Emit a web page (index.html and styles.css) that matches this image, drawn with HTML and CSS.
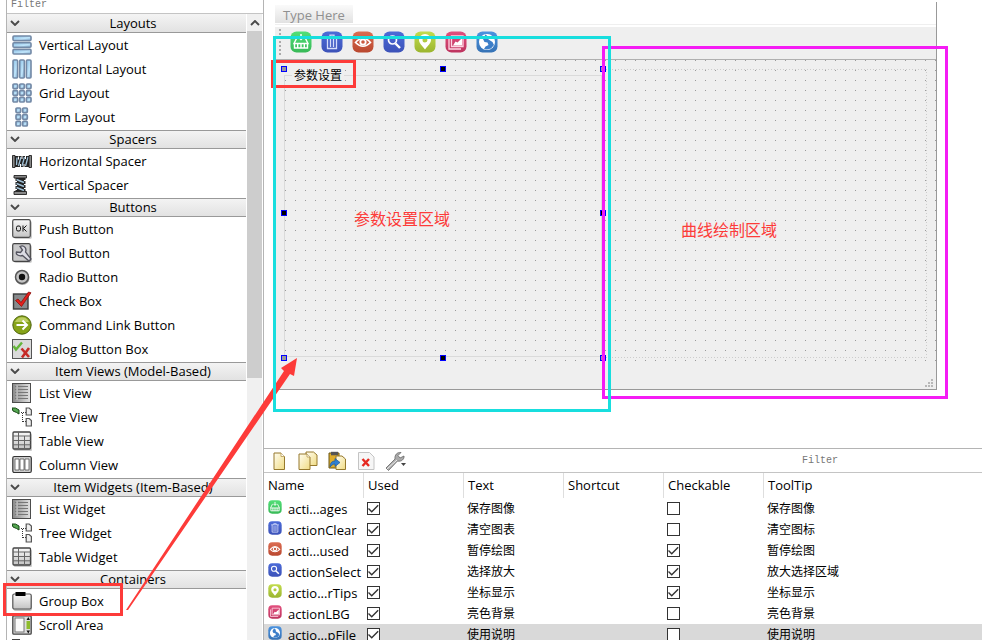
FILE: index.html
```html
<!DOCTYPE html>
<html lang="zh">
<head>
<meta charset="utf-8">
<title>Form Designer</title>
<link rel="stylesheet" href="styles.css">
</head>
<body>
<svg class="defs" aria-hidden="true">
  <defs>
    <linearGradient id="blue" x1="0" y1="0" x2="1" y2="1"><stop offset="0" stop-color="#8cc0e6"/><stop offset=".6" stop-color="#bfe4fa"/><stop offset="1" stop-color="#84b0d4"/></linearGradient>
    <linearGradient id="metal" x1="0" y1="0" x2="0" y2="1"><stop offset="0" stop-color="#f8f8f8"/><stop offset="1" stop-color="#c4c4c4"/></linearGradient>
    <linearGradient id="steel" x1="0" y1="0" x2="1" y2="0"><stop offset="0" stop-color="#888"/><stop offset="1" stop-color="#e4e4e4"/></linearGradient>
    <linearGradient id="paper" x1="0" y1="0" x2="1" y2="1"><stop offset="0" stop-color="#fffdf0"/><stop offset="1" stop-color="#f0db83"/></linearGradient>
    <linearGradient id="g-green" x1="0" y1="0" x2="0" y2="1"><stop offset="0" stop-color="#52df77"/><stop offset="1" stop-color="#38b957"/></linearGradient>
    <linearGradient id="g-blue" x1="0" y1="0" x2="0" y2="1"><stop offset="0" stop-color="#4c6bd8"/><stop offset="1" stop-color="#3c52b8"/></linearGradient>
    <linearGradient id="g-red" x1="0" y1="0" x2="0" y2="1"><stop offset="0" stop-color="#dc6d52"/><stop offset="1" stop-color="#b9482f"/></linearGradient>
    <linearGradient id="g-lime" x1="0" y1="0" x2="0" y2="1"><stop offset="0" stop-color="#c3dc4e"/><stop offset="1" stop-color="#9bb52f"/></linearGradient>
    <linearGradient id="g-pink" x1="0" y1="0" x2="0" y2="1"><stop offset="0" stop-color="#e2507e"/><stop offset="1" stop-color="#bd345f"/></linearGradient>
    <linearGradient id="g-sky" x1="0" y1="0" x2="0" y2="1"><stop offset="0" stop-color="#4b93e0"/><stop offset="1" stop-color="#3672b5"/></linearGradient>
  </defs>
  <symbol id="i-vlayout" viewBox="0 0 20 20"><g fill="url(#blue)" stroke="#7389a6" stroke-width="1.6"><rect x="1" y="1" width="18" height="4.600" rx="1"/><rect x="1" y="7.700" width="18" height="4.600" rx="1"/><rect x="1" y="14.400" width="18" height="4.600" rx="1"/></g></symbol>
  <symbol id="i-hlayout" viewBox="0 0 20 20"><g fill="url(#blue)" stroke="#7389a6" stroke-width="1.6"><rect x="1" y="1" width="4.600" height="18" rx="1"/><rect x="7.700" y="1" width="4.600" height="18" rx="1"/><rect x="14.400" y="1" width="4.600" height="18" rx="1"/></g></symbol>
  <symbol id="i-glayout" viewBox="0 0 20 20"><g fill="url(#blue)" stroke="#7389a6" stroke-width="1.7"><rect x="1" y="1" width="4.600" height="4.600" rx="1"/><rect x="7.700" y="1" width="4.600" height="4.600" rx="1"/><rect x="14.400" y="1" width="4.600" height="4.600" rx="1"/><rect x="1" y="7.700" width="4.600" height="4.600" rx="1"/><rect x="7.700" y="7.700" width="4.600" height="4.600" rx="1"/><rect x="14.400" y="7.700" width="4.600" height="4.600" rx="1"/><rect x="1" y="14.400" width="4.600" height="4.600" rx="1"/><rect x="7.700" y="14.400" width="4.600" height="4.600" rx="1"/><rect x="14.400" y="14.400" width="4.600" height="4.600" rx="1"/></g></symbol>
  <symbol id="i-flayout" viewBox="0 0 20 20"><g fill="url(#blue)" stroke="#7389a6" stroke-width="1.7"><rect x="4" y="1" width="4.600" height="4.600" rx="1"/><rect x="10.700" y="1" width="4.600" height="4.600" rx="1"/><rect x="4" y="7.700" width="4.600" height="4.600" rx="1"/><rect x="10.700" y="7.700" width="4.600" height="4.600" rx="1"/><rect x="4" y="14.400" width="4.600" height="4.600" rx="1"/><rect x="10.700" y="14.400" width="4.600" height="4.600" rx="1"/></g></symbol>
  <symbol id="i-hspacer" viewBox="0 0 20 20"><path d="M3 5h14v11H3z" fill="#222"/><path d="M5 6.500 4.500 14M9 6 6.500 15M12.500 6 10 15M16 6l-2.500 9" stroke="#9fc0d6" stroke-width="1.300"/><path d="M6.500 5.500v3M10 5v3M13.500 5v3M8.500 13v3M12 13v3" stroke="#fff" stroke-width="1"/><path d="M.5 4.500h2.500v12H.5zM17 4.500h2.500v12H17z" fill="#888" stroke="#222" stroke-width=".9"/></symbol>
  <symbol id="i-vspacer" viewBox="0 0 20 20"><path d="M3.500 3h10v14h-10z" fill="#222"/><path d="M4.500 4.500 12 7.500M4.500 8.500 12 11.500M4.500 12.500 12 15.500" stroke="#9fc0d6" stroke-width="1.500"/><path d="M3 6.500h2M3 10.500h2M3 14.500h2M12 5.500h2M12 9.500h2M12 13.500h2" stroke="#fff"/><path d="M2 .5h12.500v2.500H2zM2 16.500h12.500v3H2z" fill="#888" stroke="#222" stroke-width=".9"/></symbol>
  <symbol id="i-push" viewBox="0 0 20 20"><rect x="2" y="2" width="18" height="18" rx="2" fill="#999" opacity=".5"/><rect x=".7" y=".7" width="17.600" height="17.600" rx="1.500" fill="url(#metal)" stroke="#4c4c4c" stroke-width="1.200"/><rect x="4.500" y="7" width="4" height="5" rx="1.500" fill="none" stroke="#111"/><path d="M11 6.500v6M14.500 6.500l-3 3 3 3" fill="none" stroke="#111"/></symbol>
  <symbol id="i-tool" viewBox="0 0 20 20"><rect x="2" y="2" width="18" height="18" rx="2" fill="#999" opacity=".5"/><rect x=".7" y=".7" width="17.600" height="17.600" rx="1.500" fill="#c9c9ca" stroke="#444" stroke-width="1.200"/><path d="M8 3.500c4-2 7 2 5.500 5.500l5.500 7-2 2-6.500-5.500c-4 1-7-1-6-3.500l4 .5 2-2.500z" fill="#dcdce4" stroke="#53535e" stroke-width="1.300"/></symbol>
  <symbol id="i-radio" viewBox="0 0 20 20"><circle cx="10.500" cy="11" r="7" fill="#aaa"/><circle cx="10" cy="10" r="6.500" fill="#c4c4c4" stroke="#555" stroke-width="1.500"/><circle cx="10" cy="10" r="3.200" fill="#111"/></symbol>
  <symbol id="i-check" viewBox="0 0 20 20"><rect x="1.500" y="3" width="14.500" height="15" fill="#888b8d" stroke="#3c3c3c" stroke-width="1.400"/><path d="M3.500 9.500 6 8l3 3.500L16.500 1 19 1.800 9.500 15.500z" fill="#e4201c" stroke="#8d0f0c" stroke-width=".8"/></symbol>
  <symbol id="i-command" viewBox="0 0 20 20"><circle cx="10" cy="10" r="9.200" fill="#86a318" stroke="#4d620c"/><path d="M3 7a7.500 7.500 0 0 1 14 0z" fill="#bccd62"/><path d="M4.500 10h10M10.500 5.500 15 10l-4.500 4.500" fill="none" stroke="#fff" stroke-width="2"/></symbol>
  <symbol id="i-dialog" viewBox="0 0 20 20"><rect x=".5" y=".5" width="19" height="19" fill="#dadada" stroke="#555"/><path d="M1.500 7 4 10.500 10 3.500" fill="none" stroke="#65b53b" stroke-width="2.400"/><path d="M9.500 9.500 17 18M17 9l-7 9.500" stroke="#c62b27" stroke-width="2.600"/></symbol>
  <symbol id="i-list" viewBox="0 0 20 20"><rect x=".5" y=".5" width="18" height="19" fill="url(#steel)" stroke="#4c4c4c"/><path d="M3 3.500h1.500M6 3.500h10M3 6.500h1.500M6 6.500h10M3 9.500h1.500M6 9.500h10M3 12.500h1.500M6 12.500h10M3 15.500h1.500M6 15.500h10" stroke="#777"/><path d="M5 2v15" stroke="#ddd" stroke-width=".7"/></symbol>
  <symbol id="i-tree" viewBox="0 0 20 20"><path d="M0 1h3.500L7 3v4L4.500 5.500 1 4z" fill="#54a650" stroke="#174817"/><path d="M9 5.500h5M10.500 6v9M11 14.500h3" stroke="#333" stroke-dasharray="1 1" fill="none"/><path d="M14.200 1h3l2.200 2v5h-5.200zM14.200 11.500h3l2.200 2v5.500h-5.200z" fill="#eee" stroke="#555" stroke-width="1.200"/></symbol>
  <symbol id="i-table" viewBox="0 0 20 20"><rect x="2" y="3" width="18" height="17" rx="1" fill="#999" opacity=".5"/><rect x="1" y="1" width="17.500" height="17" rx="1" fill="url(#metal)" stroke="#444" stroke-width="1.300"/><path d="M1 5h17.500M1 9.500h17.500M1 13.800h17.500M6.500 1v17M12.500 5v13" stroke="#666" stroke-width="1"/></symbol>
  <symbol id="i-column" viewBox="0 0 20 20"><rect x=".8" y="1.500" width="18.500" height="16" rx="1.500" fill="#ccc" stroke="#333" stroke-width="1.200"/><path d="M3 4h4v11H3zM8 4h4v11H8zM13 4h4v11h-4z" fill="#fff" stroke="#555" stroke-width=".8"/></symbol>
  <symbol id="i-group" viewBox="0 0 20 20"><rect x="1.500" y="4" width="18.500" height="16" rx="2" fill="#999" opacity=".6"/><rect x=".8" y="3" width="18.400" height="15" rx="1.500" fill="url(#metal)" stroke="#555" stroke-width="1.200"/><path d="M3.500 1h10v4h-10z" fill="#000"/></symbol>
  <symbol id="i-scroll" viewBox="0 0 20 20"><rect x=".8" y=".8" width="18.400" height="18.400" rx="1" fill="#ddd" stroke="#444" stroke-width="1.300"/><rect x="3" y="3" width="9" height="14" fill="#fafafa" stroke="#777"/><path d="M14.500 6h3.500v8h-3.500z" fill="#8ebc2c"/><path d="m14.500 5 1.800-3 1.700 3zM14.500 15.500l1.800 3 1.700-3z" fill="#111"/></symbol>
  <symbol id="i-toolbox" viewBox="0 0 20 20"><path d="M0 0h8v4h11v15H0z" fill="#444"/></symbol>

  <symbol id="a-save" viewBox="0 0 22 22"><rect width="21" height="21" x=".5" y=".5" rx="6" fill="url(#g-green)"/><path d="M11 3v5M8.500 6 11 8.500 13.500 6" stroke="#fff" stroke-width="1.500" fill="none"/><path d="M7 6.500 4 12.500h14L15 6.500" fill="none" stroke="#fff" stroke-width="1.400"/><path d="M4.500 12.500v4.500h13v-4.500M7.700 12.500V17M11 12.500V17M14.300 12.500V17" fill="none" stroke="#fff" stroke-width="1.400"/></symbol>
  <symbol id="a-clear" viewBox="0 0 22 22"><rect width="21" height="21" x=".5" y=".5" rx="6" fill="url(#g-blue)"/><path d="M5 6h12M9 6V4.200h4V6M6.500 6v11.500h9V6M9.500 8v8M12.500 8v8" fill="none" stroke="#d5dcfa" stroke-width="1.300"/></symbol>
  <symbol id="a-pause" viewBox="0 0 22 22"><rect width="21" height="21" x=".5" y=".5" rx="6" fill="url(#g-red)"/><path d="M3.500 11.500Q11 3 18.500 11.500 11 19 3.500 11.500z" fill="none" stroke="#fff" stroke-width="1.600"/><circle cx="11" cy="11" r="2.700" fill="none" stroke="#fff" stroke-width="1.800"/></symbol>
  <symbol id="a-select" viewBox="0 0 22 22"><rect width="21" height="21" x=".5" y=".5" rx="6" fill="url(#g-blue)"/><circle cx="9.500" cy="9" r="4" fill="none" stroke="#fff" stroke-width="1.700"/><path d="m12.500 12.500 4.500 4.500" stroke="#fff" stroke-width="2.400"/></symbol>
  <symbol id="a-tips" viewBox="0 0 22 22"><rect width="21" height="21" x=".5" y=".5" rx="6" fill="url(#g-lime)"/><path fill-rule="evenodd" d="M11 18.500C8 14.500 5 12 5 9a6 6 0 0 1 12 0c0 3-3 5.500-6 9.500zM11 6.500a2.500 2.500 0 1 0 0 5 2.500 2.500 0 0 0 0-5z" fill="#fff"/></symbol>
  <symbol id="a-light" viewBox="0 0 22 22"><rect width="21" height="21" x=".5" y=".5" rx="6" fill="url(#g-pink)"/><path d="M6.500 5h11.500v10.500H6.500zM4 7v11h12" fill="none" stroke="#ffd5e3" stroke-width="1.300"/><path d="m8 14.500 2.500-4 2 1L17 7v7.500z" fill="#fff"/></symbol>
  <symbol id="a-help" viewBox="0 0 22 22"><rect width="21" height="21" x=".5" y=".5" rx="6" fill="url(#g-sky)"/><circle cx="11" cy="11" r="8" fill="#fff"/><path d="M11 3.500 14 4l-1.500 2.500-3 1.500 1 2.500 3 .5 1.500 3-2.500 4.500-2.500-2-.5-3L5.500 11 4 8l3-3.500z" fill="#3d7fc9" transform="rotate(180 11 11)"/></symbol>

  <symbol id="i-chev" viewBox="0 0 10 6"><path d="m1 1 4 4 4-4" fill="none" stroke="#4a4a4a" stroke-width="1.900"/></symbol>
  <symbol id="t-new" viewBox="0 0 20 20"><path d="M5 2h7l3.500 3.500V18.500H5z" fill="url(#paper)" stroke="#96792d"/><path d="M12 2v3.500h3.500" fill="#fff" stroke="#b79b50" stroke-width=".8"/></symbol>
  <symbol id="t-copy" viewBox="0 0 20 20"><path d="M8 1h7.500L19 4v10.500H8z" fill="url(#paper)" stroke="#96792d"/><path d="M1 3h8l3 3v12.500H1z" fill="url(#paper)" stroke="#96792d"/><path d="M9 3v3h3" fill="#fff" stroke="#b79b50" stroke-width=".8"/></symbol>
  <symbol id="t-paste" viewBox="0 0 20 20"><path d="M2 2h10v15H2z" fill="#dfad2b" stroke="#6b5616"/><path d="M4 .8h7v3.500H4z" fill="#555"/><path d="M9 5h6l3.500 3v10.500H9z" fill="url(#paper)" stroke="#96792d"/><path d="M3 16c0-4 2-6 5-6V7.500l5 4-5 4V13c-2 0-3 1-5 3z" fill="#2f7fd0" stroke="#1e589a" stroke-width=".7"/></symbol>
  <symbol id="t-del" viewBox="0 0 20 20"><path d="M2.500 1.500h11L18 6v12.500H2.500z" fill="#f6f6f6" stroke="#c4c4c4"/><path d="m6.500 8 6.500 7M13 8l-6.500 7" stroke="#e52820" stroke-width="2.400"/></symbol>
  <symbol id="t-wrench" viewBox="0 0 22 20"><path d="M1 17 10 8c-.5-4 2-7 6-6.500l-3 3 2 2.500 4-2c.5 3-2.500 6-6.500 5L3.500 19.500z" fill="#aaa" stroke="#666" stroke-width=".8"/><path d="m2 18 10-9" stroke="#eee"/><path d="M16 12h5l-2.500 3z" fill="#444"/></symbol>
</svg>

<div class="app">
  <aside class="widgets">
    <div class="widget-filter"><input class="filter" type="text" placeholder="Filter" aria-label="Widget filter"></div>
    <div class="widget-body">
      <nav class="tree">
        <section class="group first">
          <button class="group-head"><svg class="chev"><use href="#i-chev"/></svg>Layouts</button>
          <div class="item"><svg class="icon"><use href="#i-vlayout"/></svg>Vertical Layout</div>
          <div class="item"><svg class="icon"><use href="#i-hlayout"/></svg>Horizontal Layout</div>
          <div class="item"><svg class="icon"><use href="#i-glayout"/></svg>Grid Layout</div>
          <div class="item"><svg class="icon"><use href="#i-flayout"/></svg>Form Layout</div>
        </section>
        <section class="group">
          <button class="group-head"><svg class="chev"><use href="#i-chev"/></svg>Spacers</button>
          <div class="item"><svg class="icon"><use href="#i-hspacer"/></svg>Horizontal Spacer</div>
          <div class="item"><svg class="icon"><use href="#i-vspacer"/></svg>Vertical Spacer</div>
        </section>
        <section class="group">
          <button class="group-head"><svg class="chev"><use href="#i-chev"/></svg>Buttons</button>
          <div class="item"><svg class="icon"><use href="#i-push"/></svg>Push Button</div>
          <div class="item"><svg class="icon"><use href="#i-tool"/></svg>Tool Button</div>
          <div class="item"><svg class="icon"><use href="#i-radio"/></svg>Radio Button</div>
          <div class="item"><svg class="icon"><use href="#i-check"/></svg>Check Box</div>
          <div class="item"><svg class="icon"><use href="#i-command"/></svg>Command Link Button</div>
          <div class="item"><svg class="icon"><use href="#i-dialog"/></svg>Dialog Button Box</div>
        </section>
        <section class="group">
          <button class="group-head"><svg class="chev"><use href="#i-chev"/></svg>Item Views (Model-Based)</button>
          <div class="item"><svg class="icon"><use href="#i-list"/></svg>List View</div>
          <div class="item"><svg class="icon"><use href="#i-tree"/></svg>Tree View</div>
          <div class="item"><svg class="icon"><use href="#i-table"/></svg>Table View</div>
          <div class="item"><svg class="icon"><use href="#i-column"/></svg>Column View</div>
        </section>
        <section class="group">
          <button class="group-head"><svg class="chev"><use href="#i-chev"/></svg>Item Widgets (Item-Based)</button>
          <div class="item"><svg class="icon"><use href="#i-list"/></svg>List Widget</div>
          <div class="item"><svg class="icon"><use href="#i-tree"/></svg>Tree Widget</div>
          <div class="item"><svg class="icon"><use href="#i-table"/></svg>Table Widget</div>
        </section>
        <section class="group">
          <button class="group-head"><svg class="chev"><use href="#i-chev"/></svg>Containers</button>
          <div class="item"><svg class="icon"><use href="#i-group"/></svg>Group Box</div>
          <div class="item"><svg class="icon"><use href="#i-scroll"/></svg>Scroll Area</div>
          <div class="item"><svg class="icon"><use href="#i-toolbox"/></svg></div>
        </section>
      </nav>
      <div class="scrollbar">
        <button class="scroll-up" aria-label="Scroll up"><svg class="chev up"><use href="#i-chev"/></svg></button>
        <div class="thumb"></div>
      </div>
    </div>
  </aside>

  <main class="main">
    <div class="canvas">
      <div class="form">
        <div class="menubar"><span class="type-here">Type Here</span></div>
        <div class="toolbar">
          <span class="grip"></span>
          <button class="tool" aria-label="保存图像"><svg><use href="#a-save"/></svg></button>
          <button class="tool" aria-label="清空图标"><svg><use href="#a-clear"/></svg></button>
          <button class="tool" aria-label="暂停绘图"><svg><use href="#a-pause"/></svg></button>
          <button class="tool" aria-label="放大选择区域"><svg><use href="#a-select"/></svg></button>
          <button class="tool" aria-label="坐标显示"><svg><use href="#a-tips"/></svg></button>
          <button class="tool" aria-label="亮色背景"><svg><use href="#a-light"/></svg></button>
          <button class="tool" aria-label="使用说明"><svg><use href="#a-help"/></svg></button>
        </div>
        <div class="central">
          <div class="groupbox"><span class="groupbox-title">参数设置</span></div>
          <div class="plot-layout"></div>
          <i class="handle corner h-nw"></i><i class="handle h-n"></i><i class="handle corner h-ne"></i>
          <i class="handle h-w"></i><i class="handle h-e"></i>
          <i class="handle corner h-sw"></i><i class="handle h-s"></i><i class="handle corner h-se"></i>
        </div>
        <div class="statusbar"><svg class="size-grip" viewBox="0 0 8 8"><path d="M6 0h2v2H6zM3 3h2v2H3zM6 3h2v2H6zM0 6h2v2H0zM3 6h2v2H3zM6 6h2v2H6z" fill="#b8b8b8"/></svg></div>
      </div>
    </div>

    <section class="actions">
      <div class="action-bar">
        <button class="action-tool" aria-label="New"><svg><use href="#t-new"/></svg></button>
        <button class="action-tool" aria-label="Copy"><svg><use href="#t-copy"/></svg></button>
        <button class="action-tool" aria-label="Paste"><svg><use href="#t-paste"/></svg></button>
        <button class="action-tool" aria-label="Delete"><svg><use href="#t-del"/></svg></button>
        <button class="action-tool wide" aria-label="Configure"><svg><use href="#t-wrench"/></svg></button>
        <input class="filter action-filter" type="text" placeholder="Filter" aria-label="Action filter">
      </div>
      <table class="action-table">
        <thead><tr><th>Name</th><th>Used</th><th>Text</th><th>Shortcut</th><th>Checkable</th><th>ToolTip</th></tr></thead>
        <tbody>
          <tr><td><span class="name"><svg><use href="#a-save"/></svg>acti...ages</span></td><td><input type="checkbox" aria-label="Used" checked></td><td>保存图像</td><td></td><td><input type="checkbox" aria-label="Checkable"></td><td>保存图像</td></tr>
          <tr><td><span class="name"><svg><use href="#a-clear"/></svg>actionClear</span></td><td><input type="checkbox" aria-label="Used" checked></td><td>清空图表</td><td></td><td><input type="checkbox" aria-label="Checkable"></td><td>清空图标</td></tr>
          <tr><td><span class="name"><svg><use href="#a-pause"/></svg>acti...used</span></td><td><input type="checkbox" aria-label="Used" checked></td><td>暂停绘图</td><td></td><td><input type="checkbox" aria-label="Checkable" checked></td><td>暂停绘图</td></tr>
          <tr><td><span class="name"><svg><use href="#a-select"/></svg>actionSelect</span></td><td><input type="checkbox" aria-label="Used" checked></td><td>选择放大</td><td></td><td><input type="checkbox" aria-label="Checkable" checked></td><td>放大选择区域</td></tr>
          <tr><td><span class="name"><svg><use href="#a-tips"/></svg>actio...rTips</span></td><td><input type="checkbox" aria-label="Used" checked></td><td>坐标显示</td><td></td><td><input type="checkbox" aria-label="Checkable" checked></td><td>坐标显示</td></tr>
          <tr><td><span class="name"><svg><use href="#a-light"/></svg>actionLBG</span></td><td><input type="checkbox" aria-label="Used" checked></td><td>亮色背景</td><td></td><td><input type="checkbox" aria-label="Checkable"></td><td>亮色背景</td></tr>
          <tr class="selected"><td><span class="name"><svg><use href="#a-help"/></svg>actio...pFile</span></td><td><input type="checkbox" aria-label="Used" checked></td><td>使用说明</td><td></td><td><input type="checkbox" aria-label="Checkable"></td><td>使用说明</td></tr>
        </tbody>
      </table>
    </section>
  </main>

  <div class="notes">
    <div class="mark mark-title"></div>
    <div class="mark mark-widget"></div>
    <svg class="arrow" viewBox="0 0 172 252"><path d="M0 252 158 13 155 10 171 0 168 18 164 16 2 252z" fill="#fd3b39"/></svg>
    <div class="mark mark-plot"></div>
    <div class="mark mark-params"></div>
    <span class="note note-params">参数设置区域</span>
    <span class="note note-plot">曲线绘制区域</span>
  </div>
</div>
</body>
</html>
```
FILE: styles.css
```css
* { box-sizing: border-box; }

body {
  margin: 0;
  background: #fff;
  color: #000;
  font: 13px/20px "Open Sans", "Noto Sans CJK SC", sans-serif;
}

button {
  margin: 0;
  padding: 0;
  border: 0;
  background: none;
  color: inherit;
  font: inherit;
}

svg { display: block; }
.defs { position: absolute; width: 0; height: 0; }

.app {
  position: relative;
  display: grid;
  grid-template-columns: 264px 1fr;
  height: 100vh;
  overflow: hidden;
}

/* Widget palette */
.widgets {
  display: flex;
  flex-direction: column;
  min-height: 0;
  margin-left: 6px;
  border-left: 1px solid #b4b4b4;
  border-right: 1px solid #b4b4b4;
  overflow: hidden;
}

.widget-filter {
  flex: none;
  height: 14px;
  padding: 0 4px;
  border-bottom: 1px solid #c4c4c4;
}

.filter {
  display: block;
  width: 100%;
  height: 8px;
  padding: 0;
  border: 0;
  outline: 0;
  background: none;
  font: 10px/8px "Liberation Mono", monospace;
}
.filter::placeholder { color: #777; opacity: 1; }

.widget-body { display: flex; flex: 1; min-height: 0; }
.tree { flex: 1; overflow: hidden; }
.group { padding-bottom: 1px; }

.group-head {
  display: flex;
  align-items: center;
  justify-content: center;
  position: relative;
  width: 100%;
  height: 19px;
  padding-left: 13px;
  border-top: 1px solid #999;
  border-bottom: 1px solid #999;
  background: linear-gradient(#f3f3f3, #e2e2e2);
  line-height: 17px;
}
.first .group-head { border-top-color: #f3f3f3; }

.chev { width: 10px; height: 6px; }
.group-head .chev { position: absolute; left: 3px; top: 5px; }
.chev.up { transform: rotate(180deg); }

.item {
  display: flex;
  align-items: center;
  gap: 7px;
  height: 24px;
  padding-left: 5px;
}
.icon { width: 20px; height: 20px; }

.scrollbar {
  width: 16px;
  margin-right: 1px;
  border-left: 1px solid #fff;
  background: #f0f0f0;
}
.scroll-up { display: grid; place-items: center; width: 100%; height: 17px; }
.thumb { height: 58%; max-height: 347px; background: #cdcdcd; }

/* Form canvas */
.main { display: flex; flex-direction: column; min-width: 0; min-height: 0; }
.canvas { flex: none; padding: 2px 45px 58px 11px; }

.form {
  border-right: 1px solid #999;
  border-bottom: 1px solid #999;
  background: #efefef;
}

.menubar {
  display: flex;
  align-items: flex-start;
  height: 25px;
  padding-top: 3px;
  border-bottom: 2px solid #fff;
  background: linear-gradient(#fff 22px, #efefef 22px);
}
.type-here {
  height: 18px;
  padding: 0 8px;
  background: linear-gradient(#fafafa, #e2e2e2);
  color: #909090;
}

.toolbar {
  display: flex;
  align-items: center;
  gap: 9px;
  height: 33px;
  padding: 0 4px 2px;
  border-bottom: 1px solid #b0b0b0;
}
.grip {
  width: 2px;
  height: 26px;
  background: repeating-linear-gradient(#aaa 0 2px, #efefef 2px 4px);
}
.tool svg { width: 22px; height: 22px; }

.central {
  position: relative;
  height: 307px;
  background: conic-gradient(from 0deg at 1px 1px, #efefef 270deg, #999 270deg) 0 0 / 10px 10px;
}

.groupbox {
  position: absolute;
  left: 9px;
  top: 15px;
  width: 318px;
  height: 282px;
  border: 1px solid #dadada;
}
.groupbox-title {
  position: absolute;
  left: 7px;
  top: -10px;
  padding: 0 2px;
  background: #efefef;
  font-size: 12px;
}
.plot-layout {
  position: absolute;
  left: 328px;
  right: 9px;
  top: 9px;
  height: 289px;
  background:
    repeating-linear-gradient(90deg, #ccc 0 1px, transparent 1px 3px) 0 0 / 100% 1px no-repeat,
    repeating-linear-gradient(90deg, #ccc 0 1px, transparent 1px 3px) 0 100% / 100% 1px no-repeat,
    repeating-linear-gradient(#ccc 0 1px, transparent 1px 3px) 100% 0 / 1px 100% no-repeat;
}

.handle {
  position: absolute;
  width: 6px;
  height: 6px;
  border: 1px solid #00f;
  background: #000;
}
.corner { background: #999; }
.h-nw, .h-n, .h-ne { top: 6px; }
.h-w, .h-e { top: 150px; }
.h-sw, .h-s, .h-se { top: 295px; }
.h-nw, .h-w, .h-sw { left: 6px; }
.h-n, .h-s { left: 165px; }
.h-ne, .h-e, .h-se { left: 325px; }

.statusbar {
  display: flex;
  align-items: flex-end;
  justify-content: flex-end;
  height: 22px;
  padding: 0 3px 2px;
}
.size-grip { width: 8px; height: 8px; }

/* Action editor */
.actions { flex: 1; min-height: 0; border-top: 1px solid #b4b4b4; overflow: hidden; }

.action-bar {
  display: flex;
  align-items: center;
  gap: 9px;
  height: 24px;
  padding-left: 5px;
  border-bottom: 1px solid #c4c4c4;
}
.action-tool svg { width: 20px; height: 20px; }
.action-tool.wide svg { width: 22px; }
.action-filter { flex: none; width: 180px; height: 20px; margin-left: auto; line-height: 20px; }

.action-table {
  width: 100%;
  border-spacing: 0;
  table-layout: fixed;
}
.action-table th {
  width: 100px;
  height: 25px;
  padding: 0 4px 2px;
  background: linear-gradient(#dedede, #dedede) 100% 0 / 1px 100% no-repeat;
  font-weight: 400;
  text-align: left;
}
.action-table th:last-child { width: auto; background: none; }
.action-table td { height: 21px; padding: 0 3px; font-size: 12px; line-height: 20px; }
.selected { background: #d9d9d9; }

.name { display: flex; align-items: center; gap: 6px; padding-left: 1px; font-size: 13px; white-space: nowrap; }
.name svg { flex: none; width: 14px; height: 14px; margin-bottom: 3px; }

input[type="checkbox"] {
  appearance: none;
  display: block;
  width: 13px;
  height: 13px;
  margin: 0;
  border: 1px solid #333;
  background: #fff;
}
input[type="checkbox"]:checked::before {
  content: "";
  display: block;
  width: 11px;
  height: 11px;
  background: #333;
  clip-path: polygon(0 55%, 9% 46%, 34% 71%, 88% 17%, 97% 26%, 34% 89%);
}

/* Annotations drawn over the window */
.notes { position: absolute; inset: 0; pointer-events: none; }
.mark { position: absolute; border: 3px solid #fd3b39; }
.mark-title { left: 271px; top: 60px; width: 85px; height: 28px; }
.mark-widget { left: 3px; top: 583px; width: 120px; height: 33px; }
.mark-params { left: 273px; top: 36px; width: 338px; height: 376px; border-color: #18dede; }
.mark-plot { left: 602px; right: 34px; top: 46px; height: 353px; border-color: #f41cf4; }
.arrow { position: absolute; left: 126px; top: 358px; width: 172px; height: 252px; }
.note { position: absolute; color: #fd3b39; font-size: 16px; line-height: 24px; }
.note-params { left: 354px; top: 207px; }
.note-plot { left: 681px; top: 218px; }
```
